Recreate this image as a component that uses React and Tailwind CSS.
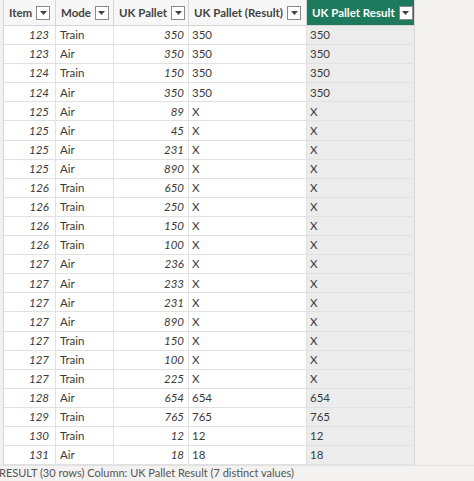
import React from "react";

const rows = [
  [123, "Train", 350, "350"],
  [123, "Air", 350, "350"],
  [124, "Train", 150, "350"],
  [124, "Air", 350, "350"],
  [125, "Air", 89, "X"],
  [125, "Air", 45, "X"],
  [125, "Air", 231, "X"],
  [125, "Air", 890, "X"],
  [126, "Train", 650, "X"],
  [126, "Train", 250, "X"],
  [126, "Train", 150, "X"],
  [126, "Train", 100, "X"],
  [127, "Air", 236, "X"],
  [127, "Air", 233, "X"],
  [127, "Air", 231, "X"],
  [127, "Air", 890, "X"],
  [127, "Train", 150, "X"],
  [127, "Train", 100, "X"],
  [127, "Train", 225, "X"],
  [128, "Air", 654, "654"],
  [129, "Train", 765, "765"],
  [130, "Train", 12, "12"],
  [131, "Air", 18, "18"],
];

function Drop() {
  return (
    <span className="ml-auto flex h-[14px] w-[14px] shrink-0 items-center justify-center border border-[#8a8a8a] bg-white">
      <svg width="7" height="4" viewBox="0 0 7 4">
        <path d="M0 0h7L3.5 4z" fill="#444" />
      </svg>
    </span>
  );
}

function Head({ label, w, active }) {
  return (
    <div
      className={
        "flex h-full shrink-0 items-center gap-1 overflow-hidden border-r border-[#d6d6d6] pl-[5px] pr-[5px] font-bold text-[11.5px] " +
        w +
        (active ? " bg-[#1d7a5c] text-white" : " text-[#444]")
      }
    >
      <span className="whitespace-nowrap">{label}</span>
      <Drop />
    </div>
  );
}

export default function App() {
  return (
    <div
      className="flex h-[481px] w-[474px] flex-col overflow-hidden bg-[#f3f2f1]"
      style={{ fontFamily: '"Segoe UI", Lato, "Liberation Sans", sans-serif' }}
    >
      <div className="flex flex-1 pl-[3px]">
        <div className="flex flex-col border-l border-[#d6d6d6]">
          <div className="flex h-[26px] border-b border-[#d6d6d6] bg-[#f7f7f7]">
            <Head label="Item" w="w-[52px]" />
            <Head label="Mode" w="w-[58px]" />
            <Head label="UK Pallet" w="w-[75px]" />
            <Head label="UK Pallet (Result)" w="w-[118px]" />
            <Head label="UK Pallet Result" w="w-[108px]" active />
          </div>
          {rows.map((r, i) => (
            <div
              key={i}
              className="flex h-[19.1px] border-b border-[#e1e1e1] text-[11.5px] leading-none text-[#3a3a3a]"
            >
              <div className="flex w-[52px] shrink-0 items-center justify-end border-r border-[#e1e1e1] bg-white pr-[6px] italic">
                {r[0]}
              </div>
              <div className="flex w-[58px] shrink-0 items-center border-r border-[#e1e1e1] bg-white pl-[4px]">
                {r[1]}
              </div>
              <div className="flex w-[75px] shrink-0 items-center justify-end border-r border-[#e1e1e1] bg-white pr-[4px] italic">
                {r[2]}
              </div>
              <div className="flex w-[118px] shrink-0 items-center border-r border-[#e1e1e1] bg-white pl-[3px]">
                {r[3]}
              </div>
              <div className="flex w-[108px] shrink-0 items-center border-r border-[#d6d6d6] bg-[#ececec] pl-[3px]">
                {r[3]}
              </div>
            </div>
          ))}
        </div>
      </div>
      <div className="flex h-[16px] items-center border-t border-[#e1e1e1] bg-[#f3f2f1] text-[11px] text-[#555] whitespace-nowrap">
        <span className="-ml-[1px]">RESULT (30 rows) Column: UK Pallet Result (7 distinct values)</span>
      </div>
    </div>
  );
}
